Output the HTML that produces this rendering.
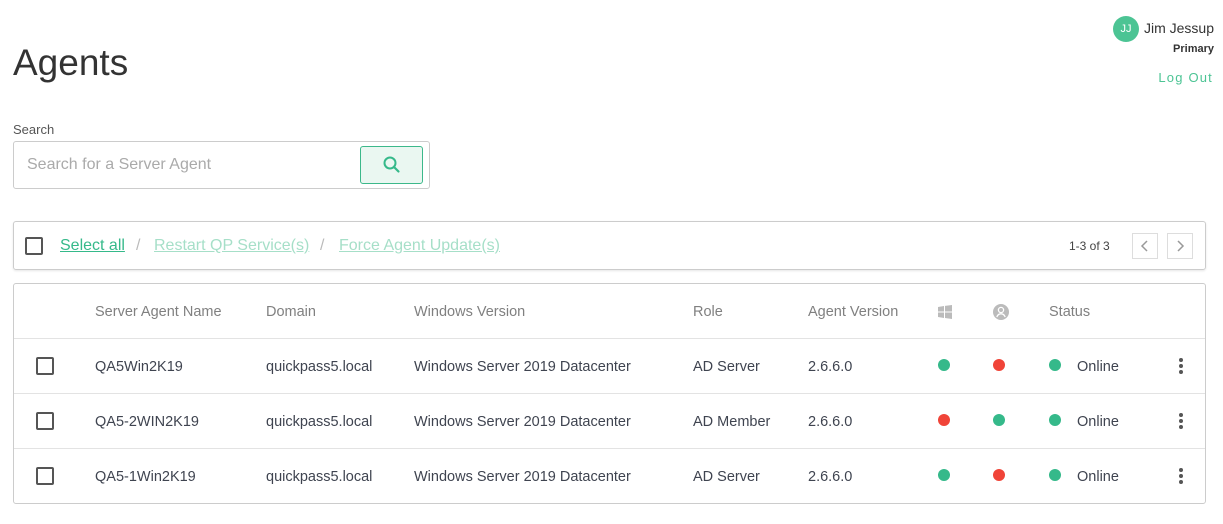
<!DOCTYPE html>
<html><head><meta charset="utf-8"><style>
*{box-sizing:border-box;margin:0;padding:0}
body{width:1223px;height:524px;background:#fff;font-family:"Liberation Sans",sans-serif;position:relative;overflow:hidden;color:#444}
.a{position:absolute;white-space:nowrap}
.cb{position:absolute;width:18px;height:18px;border:2px solid #555;border-radius:2px}
.dot{position:absolute;width:12px;height:12px;border-radius:50%}
.g{background:#35b98a}.r{background:#f04438}
.t{font-size:14.5px;color:#3f4450}
.h{font-size:14.5px;color:#808080}
.line{position:absolute;left:14px;width:1191px;height:1px;background:#e3e3e3}
.keb{position:absolute;width:4px;height:4px;border-radius:50%;background:#555}
.rt{position:absolute;right:9px;white-space:nowrap;text-align:right}
</style></head><body>
<div class="a" style="left:13px;top:42px;font-size:37px;color:#333">Agents</div>
<div class="a" style="left:1113px;top:16px;width:26px;height:26px;border-radius:50%;background:#4cc494;color:#fff;font-size:11px;text-align:center;line-height:26px">JJ</div>
<div class="rt" style="top:20px;font-size:14px;color:#333">Jim Jessup</div>
<div class="rt" style="top:43px;font-size:11px;font-weight:bold;color:#333">Primary</div>
<div class="rt" style="top:70px;font-size:13px;color:#4cc494;letter-spacing:1.2px;right:10px">Log Out</div>
<div class="a" style="left:13px;top:122px;font-size:13px;color:#555">Search</div>
<div class="a" style="left:13px;top:141px;width:417px;height:48px;border:1px solid #ccc;border-radius:3px"></div>
<div class="a" style="left:27px;top:156px;font-size:16px;color:#aaa">Search for a Server Agent</div>
<div class="a" style="left:360px;top:146px;width:63px;height:38px;border:1px solid #3cb88a;border-radius:3px;background:#eaf7f1">
<svg width="20" height="20" viewBox="0 0 20 20" style="position:absolute;left:21px;top:8px"><circle cx="8" cy="8" r="5.5" fill="none" stroke="#35b98a" stroke-width="2"/><line x1="12" y1="12" x2="16.5" y2="16.5" stroke="#35b98a" stroke-width="2.2" stroke-linecap="round"/></svg></div>
<div class="a" style="left:13px;top:221px;width:1193px;height:49px;border:1px solid #ccc;border-radius:3px;box-shadow:0 1px 2px rgba(0,0,0,.1)"></div>
<div class="cb" style="left:25px;top:237px"></div>
<div class="a" style="left:60px;top:237px;font-size:16px;color:#35b98a;text-decoration:underline">Select all</div>
<div class="a" style="left:136px;top:237px;font-size:16px;color:#bbb">/</div>
<div class="a" style="left:154px;top:237px;font-size:16px;color:#a6dfc8;text-decoration:underline">Restart QP Service(s)</div>
<div class="a" style="left:320px;top:237px;font-size:16px;color:#bbb">/</div>
<div class="a" style="left:339px;top:237px;font-size:16px;color:#a6dfc8;text-decoration:underline">Force Agent Update(s)</div>
<div class="a" style="left:1069px;top:239px;font-size:12px;color:#444">1-3 of 3</div>
<div class="a" style="left:1132px;top:233px;width:26px;height:26px;border:1px solid #ddd"><svg width="24" height="24" viewBox="0 0 24 24"><path d="M14 7l-5 5 5 5" fill="none" stroke="#999" stroke-width="1.5"/></svg></div>
<div class="a" style="left:1167px;top:233px;width:26px;height:26px;border:1px solid #ddd"><svg width="24" height="24" viewBox="0 0 24 24"><path d="M10 7l5 5-5 5" fill="none" stroke="#999" stroke-width="1.5"/></svg></div>
<div class="a" style="left:13px;top:283px;width:1193px;height:221px;border:1px solid #ccc;border-radius:3px"></div>
<div class="a h" style="left:95px;top:304px">Server Agent Name</div>
<div class="a h" style="left:266px;top:304px">Domain</div>
<div class="a h" style="left:414px;top:304px">Windows Version</div>
<div class="a h" style="left:693px;top:304px">Role</div>
<div class="a h" style="left:808px;top:304px">Agent Version</div>
<svg class="a" style="left:938px;top:305px" width="14" height="14" viewBox="0 0 14 14"><path d="M0 2l6-1v5.5H0zM7 .9L14 0v6.5H7zM0 7.5h6V13L0 12zM7 7.5h7V14l-7-1z" fill="#bbb"/></svg>
<svg class="a" style="left:993px;top:304px" width="16" height="16" viewBox="0 0 16 16"><circle cx="8" cy="8" r="8" fill="#bbb"/><circle cx="8" cy="6" r="2.6" fill="none" stroke="#fff" stroke-width="1.3"/><path d="M3.8 13c.8-2.2 2.3-3.2 4.2-3.2s3.4 1 4.2 3.2" fill="none" stroke="#fff" stroke-width="1.3"/></svg>
<div class="a h" style="left:1049px;top:304px">Status</div>
<div class="line" style="top:338px"></div>
<div class="line" style="top:393px"></div>
<div class="line" style="top:448px"></div>

<div class="cb" style="left:36px;top:357px"></div>
<div class="a t" style="left:95px;top:359px">QA5Win2K19</div>
<div class="a t" style="left:266px;top:359px">quickpass5.local</div>
<div class="a t" style="left:414px;top:359px">Windows Server 2019 Datacenter</div>
<div class="a t" style="left:693px;top:359px">AD Server</div>
<div class="a t" style="left:808px;top:359px">2.6.6.0</div>
<div class="dot g" style="left:938px;top:359px"></div>
<div class="dot r" style="left:993px;top:359px"></div>
<div class="dot g" style="left:1049px;top:359px"></div>
<div class="a t" style="left:1077px;top:359px">Online</div>
<div class="keb" style="left:1179px;top:358px"></div><div class="keb" style="left:1179px;top:364px"></div><div class="keb" style="left:1179px;top:370px"></div>

<div class="cb" style="left:36px;top:412px"></div>
<div class="a t" style="left:95px;top:414px">QA5-2WIN2K19</div>
<div class="a t" style="left:266px;top:414px">quickpass5.local</div>
<div class="a t" style="left:414px;top:414px">Windows Server 2019 Datacenter</div>
<div class="a t" style="left:693px;top:414px">AD Member</div>
<div class="a t" style="left:808px;top:414px">2.6.6.0</div>
<div class="dot r" style="left:938px;top:414px"></div>
<div class="dot g" style="left:993px;top:414px"></div>
<div class="dot g" style="left:1049px;top:414px"></div>
<div class="a t" style="left:1077px;top:414px">Online</div>
<div class="keb" style="left:1179px;top:413px"></div><div class="keb" style="left:1179px;top:419px"></div><div class="keb" style="left:1179px;top:425px"></div>

<div class="cb" style="left:36px;top:467px"></div>
<div class="a t" style="left:95px;top:469px">QA5-1Win2K19</div>
<div class="a t" style="left:266px;top:469px">quickpass5.local</div>
<div class="a t" style="left:414px;top:469px">Windows Server 2019 Datacenter</div>
<div class="a t" style="left:693px;top:469px">AD Server</div>
<div class="a t" style="left:808px;top:469px">2.6.6.0</div>
<div class="dot g" style="left:938px;top:469px"></div>
<div class="dot r" style="left:993px;top:469px"></div>
<div class="dot g" style="left:1049px;top:469px"></div>
<div class="a t" style="left:1077px;top:469px">Online</div>
<div class="keb" style="left:1179px;top:468px"></div><div class="keb" style="left:1179px;top:474px"></div><div class="keb" style="left:1179px;top:480px"></div>
</body></html>
